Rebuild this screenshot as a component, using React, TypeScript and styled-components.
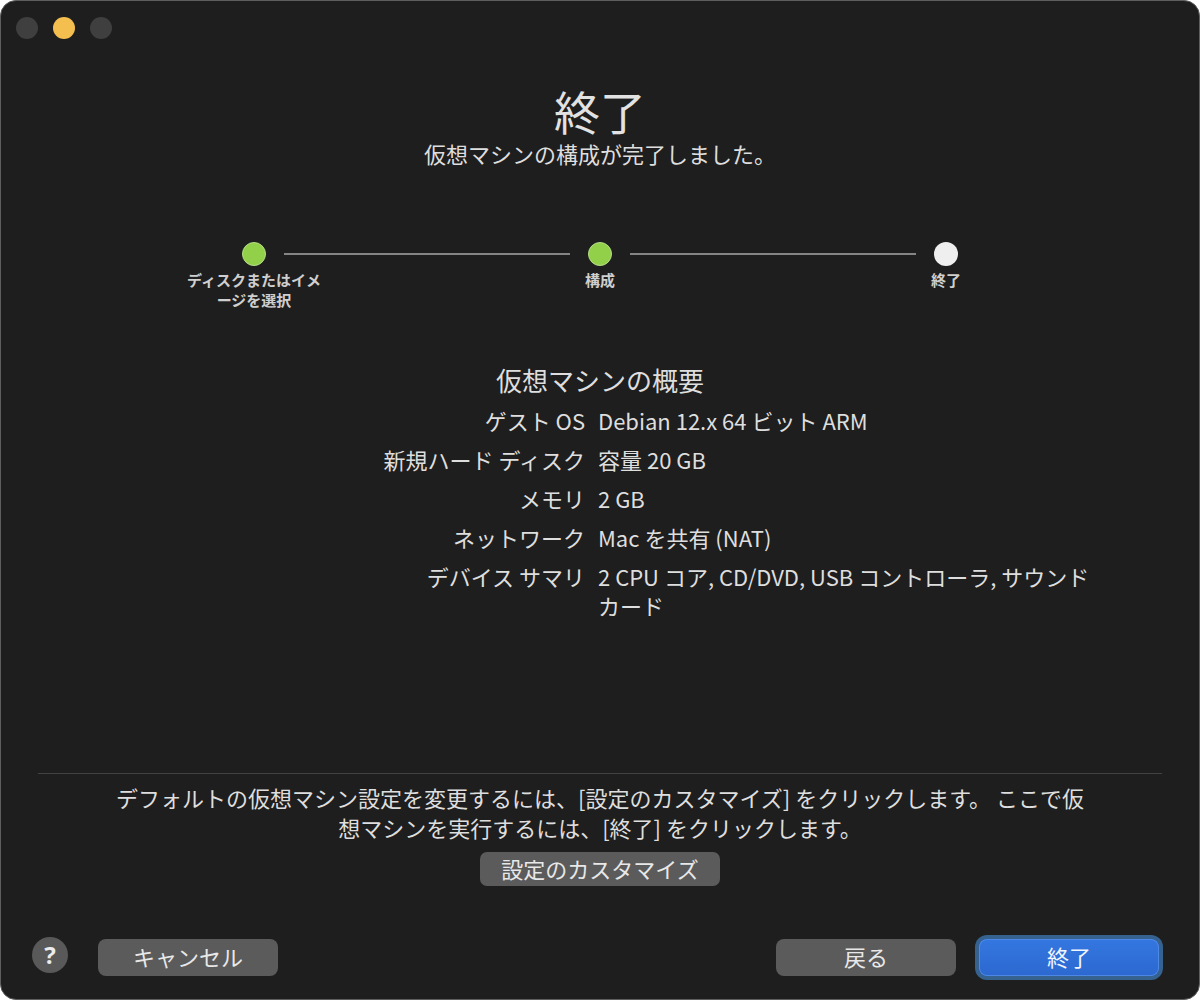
import { Fragment } from 'react';
import styled, { createGlobalStyle, css } from 'styled-components';

const GlobalStyle = createGlobalStyle`
  html, body {
    margin: 0;
    padding: 0;
    background: #ffffff;
  }
  body {
    font-family: "Noto Sans CJK JP", "Noto Sans", sans-serif;
  }
`;

const Window = styled.div`
  box-sizing: border-box;
  width: 1200px;
  height: 1000px;
  display: flex;
  flex-direction: column;
  background: #1e1e1e;
  border: 1px solid #5e5e5e;
  border-radius: 16px;
  overflow: hidden;
  color: #dedede;
`;

const TitleBar = styled.div`
  height: 53px;
  display: flex;
  align-items: center;
  gap: 15px;
  padding-left: 15px;
`;

const Light = styled.span<{ $color: string }>`
  width: 22px;
  height: 22px;
  border-radius: 50%;
  background: ${(p) => p.$color};
`;

const Header = styled.header`
  display: flex;
  flex-direction: column;
  align-items: center;
  margin-top: 28px;
`;

const Title = styled.h1`
  margin: 0;
  font-size: 46px;
  line-height: 56px;
  font-weight: 400;
  color: #e2e2e2;
`;

const Subtitle = styled.p`
  margin: 0;
  font-size: 22px;
  line-height: 30px;
`;

const Steps = styled.div`
  align-self: center;
  width: 716px;
  margin-top: 74px;
  display: grid;
  grid-template-columns: 24px 1fr 24px 1fr 24px;
  column-gap: 18px;
  row-gap: 4px;
  align-items: center;
`;

const Dot = styled.span<{ $done?: boolean }>`
  box-sizing: border-box;
  width: 24px;
  height: 24px;
  border-radius: 50%;
  ${(p) =>
    p.$done
      ? css`
          background: #93d04a;
          border: 1px solid #b4dc86;
        `
      : css`
          background: #efefef;
        `}
`;

const Connector = styled.span`
  height: 2px;
  background: #858585;
`;

const StepLabelCell = styled.div<{ $col: number }>`
  grid-row: 2;
  grid-column: ${(p) => p.$col};
  align-self: start;
  display: flex;
  justify-content: center;
`;

const StepLabel = styled.span`
  flex: none;
  width: 142px;
  text-align: center;
  font-size: 15px;
  line-height: 20px;
  font-weight: 700;
  color: #cfcfcf;
`;

const SummaryTitle = styled.h2`
  margin: 53px 0 0;
  text-align: center;
  font-size: 26px;
  line-height: 34px;
  font-weight: 400;
`;

const Summary = styled.dl`
  margin: 9px 0 0;
  display: grid;
  grid-template-columns: 584px 1fr;
  column-gap: 13px;
  row-gap: 10px;
  padding-right: 100px;
  font-size: 22px;
  line-height: 29px;
`;

const Term = styled.dt`
  text-align: right;
  white-space: nowrap;
`;

const Value = styled.dd`
  margin: 0;
  word-break: keep-all;
`;

const Footer = styled.footer`
  margin-top: auto;
  display: flex;
  flex-direction: column;
  align-items: center;
`;

const Divider = styled.hr`
  align-self: stretch;
  margin: 0 37px;
  border: none;
  height: 1px;
  background: #424242;
`;

const Note = styled.p`
  margin: 8px 0 0;
  max-width: 972px;
  text-align: center;
  font-size: 22px;
  line-height: 30px;
`;

const Button = styled.button<{ $primary?: boolean; $wide?: boolean }>`
  box-sizing: border-box;
  height: 37px;
  width: ${(p) => (p.$wide ? '180px' : 'auto')};
  padding: 0 20px 3px;
  border: none;
  border-radius: 8px;
  font-family: inherit;
  font-size: 22px;
  line-height: 1;
  color: #e8e8e8;
  background: #5b5b5b;
  ${(p) =>
    p.$primary &&
    css`
      color: #f2f6ff;
      background: linear-gradient(#3477e0, #2c68d0);
      box-shadow: inset 0 0 0 1px #4c89e6, 0 0 0 4px #35628f;
    `}
`;

const CustomizeButton = styled(Button)`
  margin-top: 10px;
  height: 34px;
  width: 240px;
  border-radius: 7px;
`;

const BottomBar = styled.div`
  margin-top: 53px;
  padding: 0 40px 23px 31px;
  display: flex;
  align-items: center;
  gap: 23px;
`;

const HelpButton = styled.button`
  width: 36px;
  height: 36px;
  margin: -5px 7px 0 0;
  padding: 0;
  border: none;
  border-radius: 50%;
  background: #595959;
  color: #ececec;
  font-family: "Noto Sans", sans-serif;
  font-size: 24px;
  font-weight: 700;
  line-height: 36px;
`;

const Spacer = styled.div`
  flex: 1;
`;

const summary: [string, string][] = [
  ['ゲスト OS', 'Debian 12.x 64 ビット ARM'],
  ['新規ハード ディスク', '容量 20 GB'],
  ['メモリ', '2 GB'],
  ['ネットワーク', 'Mac を共有 (NAT)'],
  ['デバイス サマリ', '2 CPU コア, CD/DVD, USB コントローラ, サウンド カード'],
];

export default function App() {
  return (
    <>
      <GlobalStyle />
      <Window>
        <TitleBar>
          <Light $color="#3f3f3f" />
          <Light $color="#f4bf4f" />
          <Light $color="#3f3f3f" />
        </TitleBar>

        <Header>
          <Title>終了</Title>
          <Subtitle>仮想マシンの構成が完了しました。</Subtitle>
        </Header>

        <Steps>
          <Dot $done />
          <Connector />
          <Dot $done />
          <Connector />
          <Dot />
          <StepLabelCell $col={1}>
            <StepLabel>ディスクまたはイメージを選択</StepLabel>
          </StepLabelCell>
          <StepLabelCell $col={3}>
            <StepLabel>構成</StepLabel>
          </StepLabelCell>
          <StepLabelCell $col={5}>
            <StepLabel>終了</StepLabel>
          </StepLabelCell>
        </Steps>

        <SummaryTitle>仮想マシンの概要</SummaryTitle>
        <Summary>
          {summary.map(([k, v]) => (
            <Fragment key={k}>
              <Term>{k}</Term>
              <Value>{v}</Value>
            </Fragment>
          ))}
        </Summary>

        <Footer>
          <Divider />
          <Note>
            デフォルトの仮想マシン設定を変更するには、[設定のカスタマイズ] をクリックします。 ここで仮想マシンを実行するには、[終了] をクリックします。
          </Note>
          <CustomizeButton>設定のカスタマイズ</CustomizeButton>
        </Footer>

        <BottomBar>
          <HelpButton>?</HelpButton>
          <Button $wide>キャンセル</Button>
          <Spacer />
          <Button $wide>戻る</Button>
          <Button $wide $primary>
            終了
          </Button>
        </BottomBar>
      </Window>
    </>
  );
}
